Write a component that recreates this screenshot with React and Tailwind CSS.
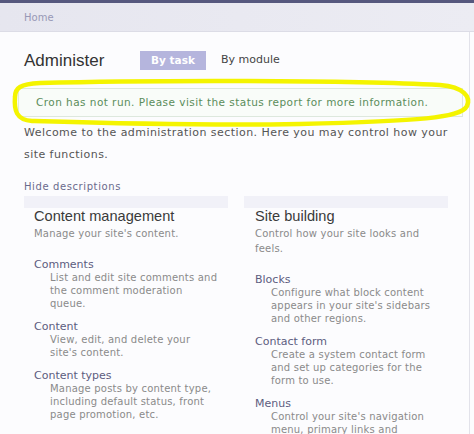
import React from "react";

const body = { fontFamily: '"DejaVu Sans", Verdana, sans-serif' };
const head = { fontFamily: '"Liberation Sans", Arial, sans-serif' };

const left = {
  title: "Content management",
  desc: "Manage your site's content.",
  items: [
    ["Comments", "List and edit site comments and the comment moderation queue."],
    ["Content", "View, edit, and delete your site's content."],
    ["Content types", "Manage posts by content type, including default status, front page promotion, etc."],
  ],
};

const right = {
  title: "Site building",
  desc: "Control how your site looks and feels.",
  items: [
    ["Blocks", "Configure what block content appears in your site's sidebars and other regions."],
    ["Contact form", "Create a system contact form and set up categories for the form to use."],
    ["Menus", "Control your site's navigation menu, primary links and secondary links."],
  ],
};

function Block({ data, pad }) {
  return (
    <div className="w-[204px]">
      <div className="h-[12px] bg-[#f1f1f8]" />
      <div className={pad + " pr-[10px]"}>
        <h3 className="text-[14.6px] leading-[16px] text-[#3a3a3a]" style={head}>{data.title}</h3>
        <p className="mt-[2px] text-[10px] leading-[15px] text-[#8a8a8a] tracking-[0.2px]">{data.desc}</p>
        <dl className="mt-[17px] flex flex-col gap-[10px]">
          {data.items.map(([t, d]) => (
            <div key={t}>
              <dt className="text-[11px] leading-[13px] text-[#5c5c80]">{t}</dt>
              <dd className="pl-[16px] text-[10px] leading-[13px] text-[#8a8a8a] tracking-[0.2px]">{d}</dd>
            </div>
          ))}
        </dl>
      </div>
    </div>
  );
}

export default function App() {
  return (
    <div className="relative w-[474px] h-[434px] overflow-hidden bg-[#fcfcfe]" style={body}>
      <div className="h-[3px] bg-[#56587e]" />
      <div className="h-[29px] flex items-center pl-[24px] bg-gradient-to-r from-[#e6e6ef] to-[#ececf3] border-b border-[#dcdce6]">
        <a className="text-[10px] text-[#9898b6]">Home</a>
      </div>

      <div className="border-r border-[#e2e2ea] mr-[4px] h-full pl-[24px]">
        <div className="pt-[19px] flex items-center h-[38px]">
          <h1 className="text-[17px] leading-[19px] text-[#333] w-[116px]" style={head}>Administer</h1>
          <span className="h-[19px] w-[66px] flex items-center justify-center bg-[#b5b5dd] text-white font-bold text-[10.5px]">By task</span>
          <span className="ml-[15px] text-[11px] text-[#444]">By module</span>
        </div>

        <div className="mt-[18px] -ml-[6px] w-[445px] h-[29px] flex items-center pl-[17px] border border-[#dde8dd] bg-[#f9fcf9] text-[10.5px] tracking-[0.45px] text-[#5b8d5b] whitespace-nowrap">
          Cron has not run. Please visit the status report for more information.
        </div>

        <p className="mt-[5px] w-[436px] text-[11px] leading-[22px] tracking-[0.45px] text-[#555]">
          Welcome to the administration section. Here you may control how your site functions.
        </p>

        <a className="block mt-[14px] text-[10px] leading-[14px] tracking-[0.6px] text-[#6a6a8c]">Hide descriptions</a>

        <div className="mt-[2px] flex gap-[16px]">
          <Block data={left} pad="pl-[10px]" />
          <Block data={right} pad="pl-[11px]" />
        </div>
      </div>

      <svg className="absolute left-0 top-0 pointer-events-none" width="474" height="434">
        <path
          d="M 40 83 C 150 80 350 80 440 85 C 464 87 471 97 467 106 C 461 118 420 121 300 124 C 200 126 100 123 32 121 C 16 120 14 110 15 97 C 15 88 20 84 40 83"
          fill="none"
          stroke="#f4f400"
          strokeWidth="4.5"
          strokeLinecap="round"
        />
      </svg>
    </div>
  );
}
